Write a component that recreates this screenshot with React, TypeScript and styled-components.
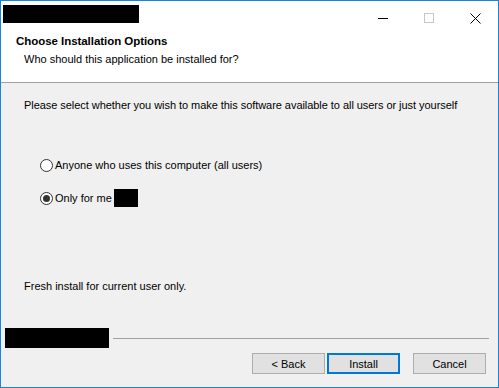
import styled, { createGlobalStyle } from "styled-components";

const Global = createGlobalStyle`
  html, body { margin: 0; padding: 0; background: #f0f0f0; }
  * { box-sizing: border-box; }
`;

const Window = styled.div`
  width: 499px;
  height: 388px;
  border: 1px solid #1c84d8;
  background: #f0f0f0;
  display: flex;
  flex-direction: column;
  font-family: "Liberation Sans", Arial, sans-serif;
  font-size: 11px;
  color: #000;
  white-space: nowrap;
`;

const Top = styled.div`
  background: #fff;
  height: 82px;
  border-bottom: 1px solid #a0a0a0;
  display: flex;
  flex-direction: column;
`;

const TitleBar = styled.div`
  height: 32px;
  display: flex;
  align-items: flex-start;
  padding: 4px 0 0 2px;
`;

const Redacted = styled.div<{ $w: number; $h: number }>`
  width: ${(p) => p.$w}px;
  height: ${(p) => p.$h}px;
  background: #000;
  flex-shrink: 0;
`;

const Caption = styled.div`
  margin-left: auto;
  display: flex;
  align-items: center;
  height: 20px;
  margin-top: 3px;
`;

const CaptionBtn = styled.div`
  width: 46px;
  height: 20px;
  display: flex;
  align-items: center;
  justify-content: center;
`;

const Heading = styled.div`
  font-weight: 700;
  font-size: 11.5px;
  letter-spacing: -0.05px;
  margin-left: 15px;
  line-height: 16px;
`;

const Sub = styled.div`
  margin-left: 23px;
  margin-top: 2px;
  line-height: 16px;
`;

const Body = styled.div`
  flex: 1;
  padding: 14px 0 0 23px;
  display: flex;
  flex-direction: column;
`;

const Text = styled.div`
  line-height: 16px;
  letter-spacing: -0.05px;
`;

const Options = styled.div`
  margin-top: 44px;
  display: flex;
  flex-direction: column;
  gap: 17px;
  padding-left: 16px;
`;

const Option = styled.label`
  display: flex;
  align-items: center;
  gap: 2px;
  height: 16px;
`;

const Radio = styled.span<{ $on?: boolean }>`
  width: 13px;
  height: 13px;
  border-radius: 50%;
  border: 1px solid #333;
  background: #fff;
  display: flex;
  align-items: center;
  justify-content: center;
  &::after {
    content: "";
    width: 7px;
    height: 7px;
    border-radius: 50%;
    background: ${(p) => (p.$on ? "#333" : "transparent")};
  }
`;

const Note = styled.div`
  margin-top: 72px;
  line-height: 16px;
`;

const Footer = styled.div`
  padding: 0 12px 13px 4px;
  display: flex;
  flex-direction: column;
`;

const Brand = styled.div`
  display: flex;
  align-items: center;
  gap: 4px;
  margin-right: -3px;
`;

const Rule = styled.div`
  flex: 1;
  height: 1px;
  background: #a0a0a0;
`;

const Buttons = styled.div`
  display: flex;
  justify-content: flex-end;
  margin-top: 5px;
`;

const Button = styled.button<{ $focus?: boolean; $gap?: number }>`
  width: 73px;
  height: 21px;
  margin-left: ${(p) => p.$gap ?? 0}px;
  background: #e1e1e1;
  border: ${(p) => (p.$focus ? "2px solid #0078d7" : "1px solid #adadad")};
  font-family: inherit;
  font-size: 11px;
  color: #000;
  padding: 0;
`;

export default function App() {
  return (
    <>
      <Global />
      <Window>
        <Top>
          <TitleBar>
            <Redacted $w={136} $h={18} />
            <Caption>
              <CaptionBtn>
                <svg width="10" height="10" viewBox="0 0 10 10">
                  <path d="M0 5.5h10" stroke="#000" strokeWidth="1" />
                </svg>
              </CaptionBtn>
              <CaptionBtn>
                <svg width="10" height="10" viewBox="0 0 10 10">
                  <rect x="0.5" y="0.5" width="9" height="9" fill="none" stroke="#c8c8c8" />
                </svg>
              </CaptionBtn>
              <CaptionBtn>
                <svg width="11" height="11" viewBox="0 0 11 11">
                  <path d="M0.5 0.5l10 10M10.5 0.5l-10 10" stroke="#000" strokeWidth="1" />
                </svg>
              </CaptionBtn>
            </Caption>
          </TitleBar>
          <Heading>Choose Installation Options</Heading>
          <Sub>Who should this application be installed for?</Sub>
        </Top>
        <Body>
          <Text>
            Please select whether you wish to make this software available to all users or just yourself
          </Text>
          <Options>
            <Option>
              <Radio />
              Anyone who uses this computer (all users)
            </Option>
            <Option>
              <Radio $on />
              Only for me
              <Redacted $w={24} $h={18} />
            </Option>
          </Options>
          <Note>Fresh install for current user only.</Note>
        </Body>
        <Footer>
          <Brand>
            <Redacted $w={104} $h={20} />
            <Rule />
          </Brand>
          <Buttons>
            <Button>&lt; Back</Button>
            <Button $focus $gap={2}>Install</Button>
            <Button $gap={13}>Cancel</Button>
          </Buttons>
        </Footer>
      </Window>
    </>
  );
}
